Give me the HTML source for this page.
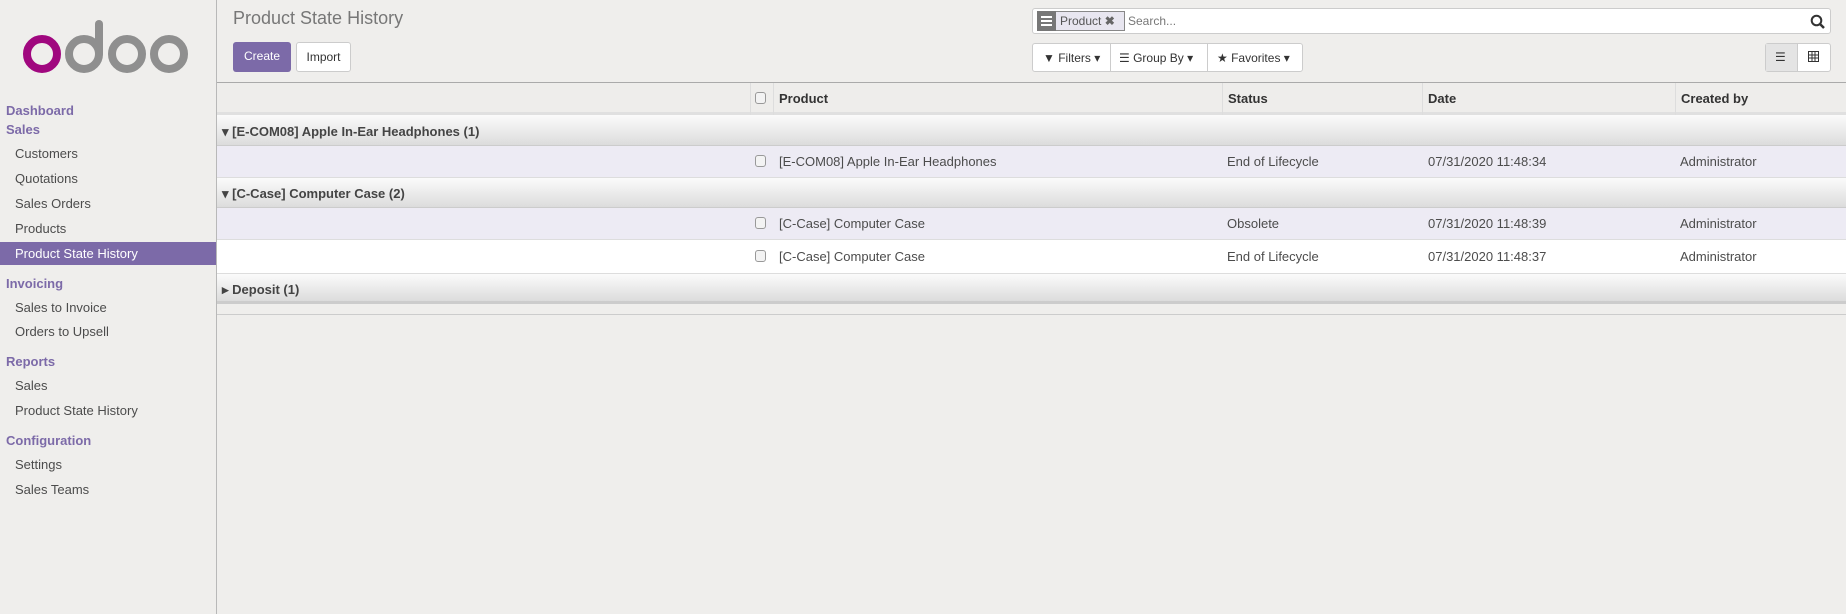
<!DOCTYPE html>
<html><head><meta charset="utf-8"><style>
*{box-sizing:border-box;margin:0;padding:0}
body{width:1846px;height:614px;background:#efeeec;font-family:"Liberation Sans",Arial,sans-serif;font-size:13px;color:#4c4c4c;position:relative;overflow:hidden}
.sb{position:absolute;left:0;top:0;width:217px;height:614px;background:#efeeec;border-right:1px solid #b8b8b8}
.sb div{position:absolute;left:0;width:216px;line-height:24px;height:24px}
.h{color:#7c6aa8;font-weight:bold;padding-left:6px}
.i{padding-left:15px;color:#4c4c4c}
.act{background:#7c6aa8;color:#fff!important}
.t{position:absolute}
.btn{position:absolute;border-radius:3px;font-size:12px;text-align:center;line-height:29px;height:30px}
.tbl{position:absolute;left:217px;width:1629px}
.row{position:absolute;left:217px;width:1629px}
.cb{position:absolute;width:11px;height:12px;border:1px solid #999;border-radius:3px;background:#f3f3f3}
.grp{background:linear-gradient(#fbfbfb,#dcdcdc);border-bottom:1px solid #ccc;font-weight:bold;color:#444}
</style></head><body>
<div class="sb">
<svg style="position:absolute;left:22px;top:20px" width="170" height="54" viewBox="0 0 170 54">
<circle cx="20" cy="34" r="15" fill="none" stroke="#a0077f" stroke-width="8"/>
<circle cx="62" cy="34" r="15" fill="none" stroke="#8f8f8f" stroke-width="8"/>
<line x1="77" y1="4" x2="77" y2="34" stroke="#8f8f8f" stroke-width="8" stroke-linecap="round"/>
<circle cx="105" cy="34" r="15" fill="none" stroke="#8f8f8f" stroke-width="8"/>
<circle cx="147" cy="34" r="15" fill="none" stroke="#8f8f8f" stroke-width="8"/>
</svg>
<div class="h" style="top:99px">Dashboard</div>
<div class="h" style="top:118px">Sales</div>
<div class="i" style="top:142px">Customers</div>
<div class="i" style="top:167px">Quotations</div>
<div class="i" style="top:192px">Sales Orders</div>
<div class="i" style="top:217px">Products</div>
<div class="i act" style="top:242px;height:23px;line-height:23px">Product State History</div>
<div class="h" style="top:272px">Invoicing</div>
<div class="i" style="top:296px">Sales to Invoice</div>
<div class="i" style="top:320px">Orders to Upsell</div>
<div class="h" style="top:350px">Reports</div>
<div class="i" style="top:374px">Sales</div>
<div class="i" style="top:399px">Product State History</div>
<div class="h" style="top:429px">Configuration</div>
<div class="i" style="top:453px">Settings</div>
<div class="i" style="top:478px">Sales Teams</div>
</div>

<div class="t" style="left:233px;top:8px;font-size:18px;color:#777">Product State History</div>
<div class="btn" style="left:233px;top:42px;width:58px;background:#7c6aa8;color:#fff">Create</div>
<div class="btn" style="left:296px;top:42px;width:55px;background:#fff;border:1px solid #ccc;color:#333">Import</div>

<div style="position:absolute;left:1032px;top:8px;width:799px;height:26px;background:#fff;border:1px solid #ccc;border-radius:3px"></div>
<div style="position:absolute;left:1037px;top:11px;width:88px;height:20px;border:1px solid #888;background:#e8e6f0"></div>
<div style="position:absolute;left:1037px;top:11px;width:19px;height:20px;background:#777"></div>
<svg style="position:absolute;left:1041px;top:15px" width="11" height="12"><rect y="1" width="11" height="2" fill="#fff"/><rect y="5" width="11" height="2" fill="#fff"/><rect y="9" width="11" height="2" fill="#fff"/></svg>
<div class="t" style="left:1060px;top:14px;font-size:12px;color:#555">Product <b style="color:#666">✖</b></div>
<div class="t" style="left:1128px;top:14px;font-size:12px;color:#777">Search...</div>
<svg style="position:absolute;left:1810px;top:14px" width="15" height="15"><circle cx="6.5" cy="6.5" r="4.8" fill="none" stroke="#333" stroke-width="2"/><line x1="10" y1="10" x2="14" y2="14" stroke="#333" stroke-width="2.5"/></svg>

<div style="position:absolute;left:1032px;top:43px;width:271px;height:29px;background:#fff;border:1px solid #ccc;border-radius:3px"></div>
<div style="position:absolute;left:1110px;top:43px;width:1px;height:29px;background:#ccc"></div>
<div style="position:absolute;left:1207px;top:43px;width:1px;height:29px;background:#ccc"></div>
<div class="t" style="left:1043px;top:51px;font-size:12px;color:#333">▼ Filters ▾</div>
<div class="t" style="left:1119px;top:51px;font-size:12px;color:#333">☰ Group By ▾</div>
<div class="t" style="left:1217px;top:51px;font-size:12px;color:#333">★ Favorites ▾</div>
<div style="position:absolute;left:1765px;top:43px;width:66px;height:29px;background:#fff;border:1px solid #ccc;border-radius:3px"></div>
<div style="position:absolute;left:1766px;top:44px;width:32px;height:27px;background:#e4e4e4;border-right:1px solid #ccc"></div>
<div class="t" style="left:1775px;top:50px;font-size:12px;color:#333">☰</div>
<svg style="position:absolute;left:1808px;top:51px" width="11" height="11"><rect x=".5" y=".5" width="10" height="10" fill="none" stroke="#333"/><path d="M4 0v11M7 0v11M0 4h11M0 7h11" stroke="#333"/></svg>

<div class="row" style="top:82px;height:1px;background:#aaa"></div>
<div class="row" style="top:83px;height:32px;background:#eeedeb;border-bottom:3px solid #e0e0e0"></div>
<div style="position:absolute;left:750px;top:83px;width:24px;height:32px;border-left:1px solid #ddd;border-right:1px solid #ddd"></div>
<div style="position:absolute;left:1222px;top:83px;height:32px;border-left:1px solid #ddd"></div>
<div style="position:absolute;left:1422px;top:83px;height:32px;border-left:1px solid #ddd"></div>
<div style="position:absolute;left:1675px;top:83px;height:32px;border-left:1px solid #ddd"></div>
<div class="cb" style="left:755px;top:92px"></div>
<div class="t" style="left:779px;top:91px;font-weight:bold;color:#333">Product</div>
<div class="t" style="left:1228px;top:91px;font-weight:bold;color:#333">Status</div>
<div class="t" style="left:1428px;top:91px;font-weight:bold;color:#333">Date</div>
<div class="t" style="left:1681px;top:91px;font-weight:bold;color:#333">Created by</div>

<div class="row grp" style="top:115px;height:31px"><span style="position:absolute;left:5px;top:9px">▾ [E-COM08] Apple In-Ear Headphones (1)</span></div>
<div class="row" style="top:146px;height:32px;background:#edebf4;border-bottom:1px solid #ddd"></div>
<div class="row grp" style="top:178px;height:30px"><span style="position:absolute;left:5px;top:8px">▾ [C-Case] Computer Case (2)</span></div>
<div class="row" style="top:208px;height:32px;background:#edebf4;border-bottom:1px solid #ddd"></div>
<div class="row" style="top:240px;height:34px;background:#fff;border-bottom:1px solid #ddd"></div>
<div class="row grp" style="top:274px;height:30px;border-bottom:3px solid #ccc"><span style="position:absolute;left:5px;top:8px">▸ Deposit (1)</span></div>
<div class="row" style="top:314px;height:1px;background:#ccc"></div>

<div class="cb" style="left:755px;top:155px"></div>
<div class="t" style="left:779px;top:154px">[E-COM08] Apple In-Ear Headphones</div>
<div class="t" style="left:1227px;top:154px">End of Lifecycle</div>
<div class="t" style="left:1428px;top:154px">07/31/2020 11:48:34</div>
<div class="t" style="left:1680px;top:154px">Administrator</div>

<div class="cb" style="left:755px;top:217px"></div>
<div class="t" style="left:779px;top:216px">[C-Case] Computer Case</div>
<div class="t" style="left:1227px;top:216px">Obsolete</div>
<div class="t" style="left:1428px;top:216px">07/31/2020 11:48:39</div>
<div class="t" style="left:1680px;top:216px">Administrator</div>

<div class="cb" style="left:755px;top:250px"></div>
<div class="t" style="left:779px;top:249px">[C-Case] Computer Case</div>
<div class="t" style="left:1227px;top:249px">End of Lifecycle</div>
<div class="t" style="left:1428px;top:249px">07/31/2020 11:48:37</div>
<div class="t" style="left:1680px;top:249px">Administrator</div>
</body></html>
